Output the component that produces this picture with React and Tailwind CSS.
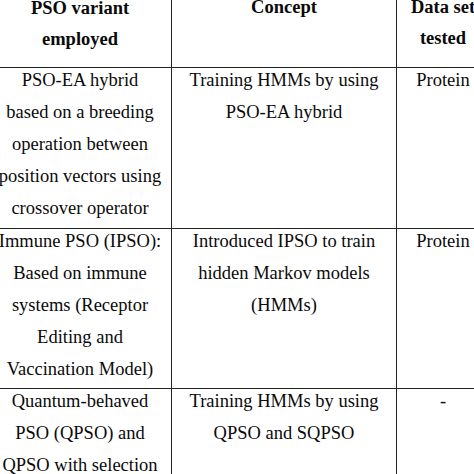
import React from 'react';

const rows = [
  {
    h: 'h-[161px]',
    variant: ['PSO-EA hybrid', 'based on a breeding', 'operation between', 'position vectors using', 'crossover operator'],
    concept: ['Training HMMs by using', 'PSO-EA hybrid'],
    data: ['Protein'],
  },
  {
    h: 'h-[160px]',
    variant: ['Immune PSO (IPSO):', 'Based on immune', 'systems (Receptor', 'Editing and', 'Vaccination Model)'],
    concept: ['Introduced IPSO to train', 'hidden Markov models', '(HMMs)'],
    data: ['Protein'],
  },
  {
    h: 'h-[120px]',
    variant: ['Quantum-behaved', 'PSO (QPSO) and', 'QPSO with selection', 'operator (SQPSO)'],
    concept: ['Training HMMs by using', 'QPSO and SQPSO'],
    data: ['-'],
  },
];

const Lines = ({ items }) => (
  <div className="-mt-[4px]">
    {items.map((t, i) => (
      <div key={i} className="whitespace-nowrap">{t}</div>
    ))}
  </div>
);

export default function App() {
  return (
    <div
      className="w-[474px] h-[474px] overflow-hidden bg-white text-[#0a0a0a] text-[18.5px] leading-[32px]"
      style={{ fontFamily: '"Liberation Serif", "Times New Roman", serif' }}
    >
      <div className="-ml-[11px] w-[500px] grid grid-cols-[183px_225px_92px] text-center">
        {/* header */}
        <div className="h-[68px] border-r border-b border-[#222] font-bold leading-[31px]">
          <div className="-mt-[7px]">
            <div>PSO variant</div>
            <div>employed</div>
          </div>
        </div>
        <div className="h-[68px] border-r border-b border-[#222] font-bold leading-[31px]">
          <div className="-mt-[8px]">Concept</div>
        </div>
        <div className="h-[68px] border-b border-[#222] font-bold leading-[31px]">
          <div className="-mt-[8px]">
            <div>Data set</div>
            <div>tested</div>
          </div>
        </div>

        {rows.map((r, i) => (
          <React.Fragment key={i}>
            <div className={`${r.h} border-r border-b border-[#222] overflow-hidden flex justify-center`}>
              <Lines items={r.variant} />
            </div>
            <div className={`${r.h} border-r border-b border-[#222]`}>
              <Lines items={r.concept} />
            </div>
            <div className={`${r.h} border-b border-[#222]`}>
              <Lines items={r.data} />
            </div>
          </React.Fragment>
        ))}
      </div>
    </div>
  );
}
